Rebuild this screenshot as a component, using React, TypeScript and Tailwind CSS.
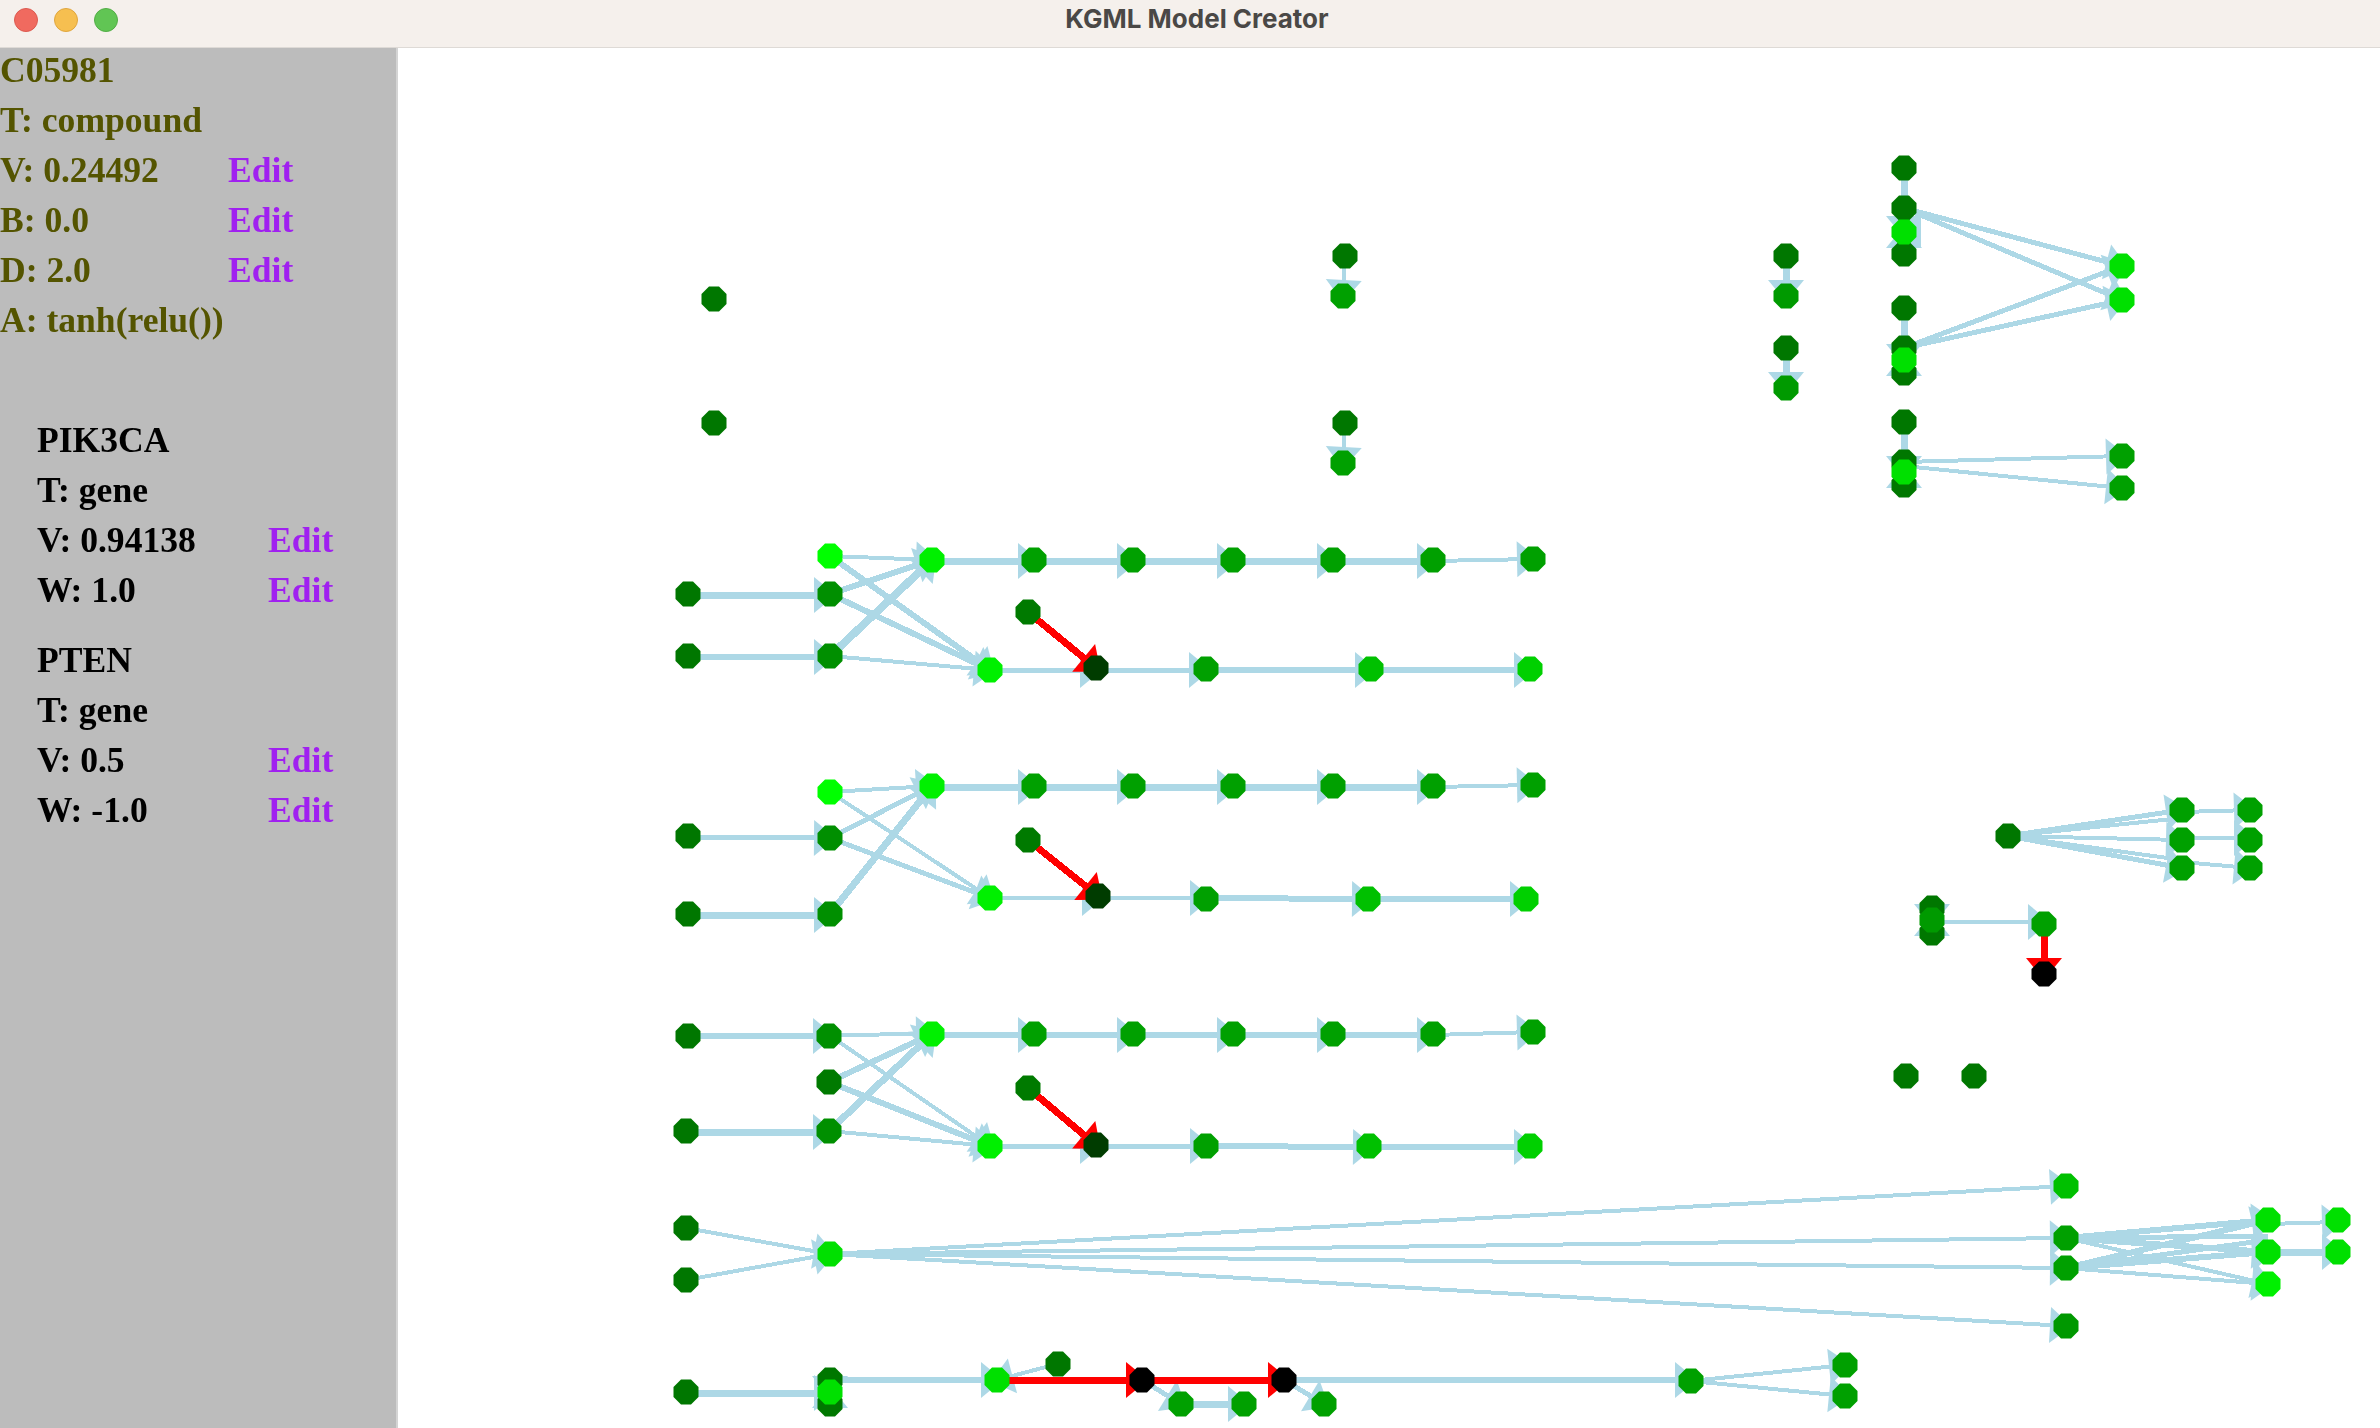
import React from "react";

type E = [number, number, number, number, number, string?];
type N = [number, number, string];

const L = "#add8e6";
const R = "#ff0000";

const chain = (pts: [number, number, number?][]): E[] => {
  const out: E[] = [];
  for (let i = 1; i < pts.length; i++) {
    out.push([pts[i - 1][0], pts[i - 1][1], pts[i][0], pts[i][1], pts[i][2] ?? 5]);
  }
  return out;
};

const edges: E[] = [
  // first pathway
  [688, 595, 830, 595, 7], [688, 657, 830, 657, 6],
  [830, 556, 932, 560, 4], [830, 594, 932, 560, 6], [830, 656, 932, 560, 8],
  [830, 556, 990, 670, 6], [830, 594, 990, 670, 6], [830, 656, 990, 670, 4],
  ...chain([[932, 561], [1034, 561, 7], [1133, 561, 7], [1233, 561, 7], [1333, 561, 7], [1433, 561, 7], [1533, 559, 4]]),
  ...chain([[990, 670], [1096, 670, 5], [1205, 670, 5], [1371, 670, 6], [1530, 670, 6]]),
  // second pathway
  [688, 837, 830, 838, 5], [688, 915, 830, 915, 7],
  [830, 792, 932, 786, 4], [830, 838, 932, 786, 5], [830, 914, 932, 786, 7],
  [830, 792, 990, 898, 4], [830, 838, 990, 898, 5],
  ...chain([[932, 787], [1034, 787, 7], [1133, 787, 7], [1233, 787, 7], [1333, 787, 7], [1433, 787, 7], [1533, 785, 4]]),
  ...chain([[990, 898], [1098, 898, 4], [1206, 898, 4], [1368, 899, 6], [1526, 899, 6]]),
  // third pathway
  [688, 1036, 829, 1036, 6], [686, 1132, 829, 1132, 7],
  [829, 1035, 932, 1034, 4], [829, 1082, 932, 1034, 6], [829, 1131, 932, 1034, 7],
  [829, 1035, 990, 1146, 4], [829, 1082, 990, 1146, 6], [829, 1131, 990, 1146, 4],
  ...chain([[932, 1035], [1034, 1035, 6], [1133, 1035, 6], [1233, 1035, 6], [1333, 1035, 6], [1433, 1035, 6], [1533, 1032, 4]]),
  ...chain([[990, 1146], [1096, 1146, 5], [1206, 1146, 5], [1369, 1147, 6], [1530, 1147, 6]]),
  // fan to the right
  [686, 1228, 830, 1254, 4], [686, 1280, 830, 1254, 4],
  [830, 1254, 2066, 1186, 4], [830, 1254, 2066, 1238, 4], [830, 1254, 2066, 1268, 4], [830, 1254, 2066, 1326, 4],
  [2066, 1238, 2268, 1220, 6], [2066, 1238, 2268, 1252, 6], [2066, 1238, 2268, 1284, 4],
  [2066, 1268, 2268, 1220, 6], [2066, 1268, 2268, 1252, 6], [2066, 1268, 2268, 1284, 4],
  [2268, 1224, 2338, 1222, 4], [2268, 1252, 2338, 1252, 7],
  // bottom row
  [686, 1393, 830, 1393, 7], [830, 1380, 997, 1380, 6], [1057, 1364, 997, 1380, 4],
  [830, 1380, 830, 1392, 5], [830, 1404, 830, 1392, 5],
  [1142, 1380, 1181, 1404, 5], [1181, 1404, 1244, 1404, 7], [1284, 1380, 1324, 1404, 5],
  [1284, 1380, 1691, 1380, 6], [1691, 1381, 1845, 1365, 4], [1691, 1381, 1845, 1396, 4],
  // upper right
  [1904, 168, 1904, 232, 7], [1904, 254, 1904, 232, 5],
  [1904, 208, 2122, 266, 5], [1904, 208, 2122, 300, 5],
  [1904, 348, 2122, 266, 5], [1904, 348, 2122, 300, 5],
  [1904, 308, 1904, 360, 7], [1904, 373, 1904, 360, 5],
  [1904, 422, 1904, 472, 7], [1904, 485, 1904, 472, 5],
  [1904, 462, 2122, 456, 4], [1904, 466, 2122, 488, 4],
  [1786, 256, 1786, 296, 7], [1786, 348, 1786, 388, 7],
  [1345, 256, 1343, 296, 4], [1345, 423, 1343, 463, 4],
  // middle right
  [2008, 836, 2182, 810, 5], [2008, 836, 2182, 840, 4], [2008, 836, 2182, 868, 5],
  [2182, 812, 2250, 810, 4], [2182, 838, 2250, 838, 4], [2182, 862, 2250, 868, 4],
  [1932, 922, 2044, 922, 4], [1932, 908, 1932, 920, 4], [1932, 933, 1932, 920, 4],
  // red edges
  [1028, 612, 1096, 668, 7, R], [1028, 840, 1098, 896, 7, R], [1028, 1088, 1096, 1145, 7, R],
  [997, 1380, 1142, 1380, 7, R], [1142, 1380, 1284, 1380, 7, R], [2044, 924, 2044, 974, 7, R],
];

// lines that carry no arrowhead of their own
const plain: E[] = [
  [1917, 216, 1917, 248, 8], [2008, 836, 2182, 818, 4], [2008, 836, 2182, 860, 4],
  [2066, 1238, 2268, 1236, 5], [2066, 1268, 2268, 1240, 5],
];

const nodes: N[] = [
  [688, 594, "#007700"], [688, 656, "#007700"], [830, 556, "#00ff00"], [830, 594, "#008f00"], [830, 656, "#008f00"],
  [932, 560, "#00f000"], [1034, 560, "#00a000"], [1133, 560, "#00a000"], [1233, 560, "#00a000"], [1333, 560, "#00a000"],
  [1433, 560, "#00a000"], [1533, 559, "#00a000"], [1028, 612, "#007a00"], [990, 670, "#00f000"], [1096, 668, "#003c00"],
  [1206, 669, "#00a000"], [1371, 669, "#00c000"], [1530, 669, "#00d000"],

  [688, 836, "#007700"], [830, 792, "#00ff00"], [830, 838, "#008f00"], [688, 914, "#007700"], [830, 914, "#008f00"],
  [932, 786, "#00f000"], [1034, 786, "#00a000"], [1133, 786, "#00a000"], [1233, 786, "#00a000"], [1333, 786, "#00a000"],
  [1433, 786, "#00a000"], [1533, 785, "#00a000"], [1028, 840, "#007a00"], [990, 898, "#00f000"], [1098, 896, "#003c00"],
  [1206, 899, "#00a000"], [1368, 899, "#00c000"], [1526, 899, "#00d000"],

  [688, 1036, "#007700"], [829, 1036, "#008f00"], [829, 1082, "#007a00"], [829, 1131, "#008f00"], [686, 1131, "#007700"],
  [932, 1034, "#00f000"], [1034, 1034, "#00a000"], [1133, 1034, "#00a000"], [1233, 1034, "#00a000"], [1333, 1034, "#00a000"],
  [1433, 1034, "#00a000"], [1533, 1032, "#00a000"], [1028, 1088, "#007a00"], [990, 1146, "#00f000"], [1096, 1145, "#003c00"],
  [1206, 1146, "#00a000"], [1369, 1146, "#00c000"], [1530, 1146, "#00d000"],

  [686, 1228, "#007700"], [686, 1280, "#007700"], [830, 1254, "#00e000"],
  [2066, 1186, "#00c000"], [2066, 1238, "#00a000"], [2066, 1268, "#00a000"], [2066, 1326, "#009800"],
  [2268, 1220, "#00e000"], [2268, 1252, "#00e000"], [2268, 1284, "#00f000"], [2338, 1220, "#00e000"], [2338, 1252, "#00e000"],

  [686, 1392, "#007700"], [830, 1380, "#007700"], [830, 1404, "#007700"], [830, 1392, "#00e000"],
  [997, 1380, "#00e000"], [1058, 1364, "#007700"], [1142, 1380, "#000000"], [1284, 1380, "#000000"],
  [1181, 1404, "#00a000"], [1244, 1404, "#00a000"], [1324, 1404, "#00a000"], [1691, 1381, "#00a000"],
  [1845, 1365, "#00a000"], [1845, 1396, "#00a000"],

  [714, 299, "#007700"], [714, 423, "#007700"], [1345, 256, "#007700"], [1343, 296, "#00a000"], [1345, 423, "#007700"], [1343, 463, "#00a000"],
  [1786, 256, "#007700"], [1786, 296, "#009a00"], [1786, 348, "#007700"], [1786, 388, "#009a00"],
  [1904, 168, "#007700"], [1904, 208, "#007700"], [1904, 254, "#007700"], [1904, 232, "#00e000"],
  [1904, 308, "#007700"], [1904, 348, "#007700"], [1904, 373, "#007700"], [1904, 360, "#00e000"],
  [1904, 422, "#007700"], [1904, 462, "#007700"], [1904, 485, "#007700"], [1904, 472, "#00e000"],
  [2122, 266, "#00e000"], [2122, 300, "#00e000"], [2122, 456, "#00a000"], [2122, 488, "#00a000"],

  [2008, 836, "#007700"], [2182, 810, "#00a000"], [2182, 840, "#00a000"], [2182, 868, "#00a000"],
  [2250, 810, "#00a000"], [2250, 840, "#00a000"], [2250, 868, "#00a000"],
  [1932, 908, "#007700"], [1932, 933, "#007700"], [1932, 920, "#009a00"], [2044, 924, "#00a000"], [2044, 974, "#000000"],
  [1906, 1076, "#007700"], [1974, 1076, "#007700"],
];

const head = ([x1, y1, x2, y2, , color]: E) => {
  const d = Math.hypot(x2 - x1, y2 - y1) || 1;
  const ux = (x2 - x1) / d;
  const uy = (y2 - y1) / d;
  const bx = x2 - ux * 16;
  const by = y2 - uy * 16;
  return {
    points: `${bx - uy * 18},${by + ux * 18} ${bx + uy * 18},${by - ux * 18} ${x2 + ux * 6},${y2 + uy * 6}`,
    fill: color ?? L,
  };
};

const octagon = (x: number, y: number) => {
  const a = 12.5;
  const b = 5;
  return [
    [x - b, y - a], [x + b, y - a], [x + a, y - b], [x + a, y + b],
    [x + b, y + a], [x - b, y + a], [x - a, y + b], [x - a, y - b],
  ].map((p) => p.join(",")).join(" ");
};

function Graph() {
  return (
    <svg viewBox="398 48 1982 1380" className="block w-full h-full blur-[0.5px]">
      {edges.filter((e) => !e[5]).map((e, i) => (
        <line key={`l${i}`} x1={e[0]} y1={e[1]} x2={e[2]} y2={e[3]} stroke={L} strokeWidth={e[4]} shapeRendering="crispEdges" />
      ))}
      {plain.map((e, i) => (
        <line key={`p${i}`} x1={e[0]} y1={e[1]} x2={e[2]} y2={e[3]} stroke={L} strokeWidth={e[4]} shapeRendering="crispEdges" />
      ))}
      {edges.filter((e) => !e[5]).map((e, i) => {
        const h = head(e);
        return <polygon key={`h${i}`} points={h.points} fill={h.fill} />;
      })}
      {edges.filter((e) => e[5]).map((e, i) => {
        const h = head(e);
        return (
          <g key={`r${i}`}>
            <line x1={e[0]} y1={e[1]} x2={e[2]} y2={e[3]} stroke={R} strokeWidth={e[4]} shapeRendering="crispEdges" />
            <polygon points={h.points} fill={h.fill} />
          </g>
        );
      })}
      {nodes.map(([x, y, c], i) => (
        <polygon key={`n${i}`} points={octagon(x, y)} fill={c} />
      ))}
    </svg>
  );
}

function Row({ label, edit, tone, labelW }: { label: string; edit?: boolean; tone: string; labelW: string }) {
  return (
    <div className={`flex h-[50px] leading-[45px] ${tone}`}>
      <span className={`${labelW} shrink-0`}>{label}</span>
      {edit && <span className="text-[#a020f0]">Edit</span>}
    </div>
  );
}

export default function App() {
  const olive = "text-[#545400]";
  const black = "text-black";
  return (
    <div className="flex h-[1428px] w-[2380px] flex-col overflow-hidden bg-white">
      <header className="relative flex h-[48px] shrink-0 justify-center border-b border-[#dedad6] bg-[#f5f0ec] pl-[14px] pt-[3px]">
        <div className="absolute left-[14px] top-[8px] flex gap-[16px]">
          <span className="h-[24px] w-[24px] rounded-full border border-[#dc5a50] bg-[#f06a5f]" />
          <span className="h-[24px] w-[24px] rounded-full border border-[#e0a63e] bg-[#f6bf50]" />
          <span className="h-[24px] w-[24px] rounded-full border border-[#52ad46] bg-[#61c554]" />
        </div>
        <span className="font-['Inter',sans-serif] text-[26px] leading-[32px] font-bold text-[#4a4846]">KGML Model Creator</span>
      </header>
      <div className="flex min-h-0 flex-1">
        <aside className="w-[398px] shrink-0 border-r-2 border-[#d4d4d4] bg-[#bcbcbc] font-['Liberation_Serif',serif] text-[35.6px] font-bold blur-[0.4px]">
          <div>
            <Row label="C05981" tone={olive} labelW="w-[228px]" />
            <Row label="T: compound" tone={olive} labelW="w-[228px]" />
            <Row label="V: 0.24492" edit tone={olive} labelW="w-[228px]" />
            <Row label="B: 0.0" edit tone={olive} labelW="w-[228px]" />
            <Row label="D: 2.0" edit tone={olive} labelW="w-[228px]" />
            <Row label="A: tanh(relu())" tone={olive} labelW="w-[228px]" />
          </div>
          <div className="mt-[70px] pl-[37px]">
            <Row label="PIK3CA" tone={black} labelW="w-[231px]" />
            <Row label="T: gene" tone={black} labelW="w-[231px]" />
            <Row label="V: 0.94138" edit tone={black} labelW="w-[231px]" />
            <Row label="W: 1.0" edit tone={black} labelW="w-[231px]" />
          </div>
          <div className="mt-[20px] pl-[37px]">
            <Row label="PTEN" tone={black} labelW="w-[231px]" />
            <Row label="T: gene" tone={black} labelW="w-[231px]" />
            <Row label="V: 0.5" edit tone={black} labelW="w-[231px]" />
            <Row label="W: -1.0" edit tone={black} labelW="w-[231px]" />
          </div>
        </aside>
        <main className="min-w-0 flex-1">
          <Graph />
        </main>
      </div>
    </div>
  );
}
